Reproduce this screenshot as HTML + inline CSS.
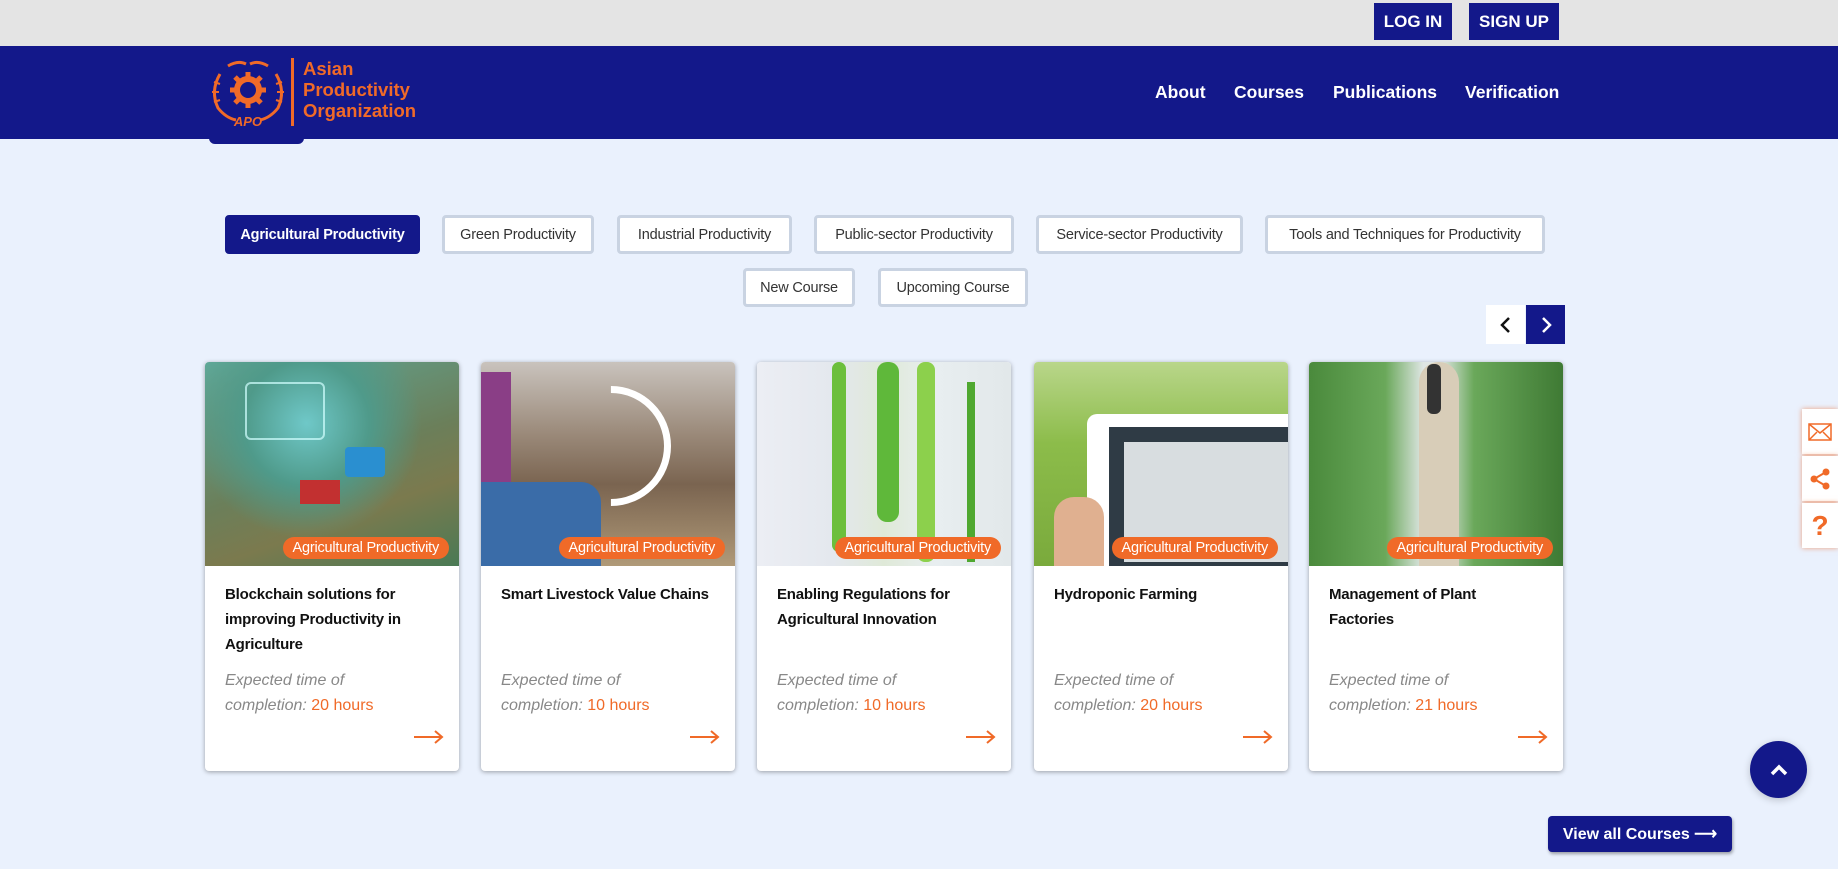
<!DOCTYPE html>
<html><head><meta charset="utf-8"><style>
*{box-sizing:border-box;margin:0;padding:0}
body{width:1838px;height:869px;overflow:hidden;background:#eaf1fd;font-family:"Liberation Sans",Arial,sans-serif;position:relative}
.top{position:absolute;left:0;top:0;width:1838px;height:46px;background:#e4e4e4}
.tb{position:absolute;top:3px;height:37px;background:#13188a;color:#fff;font-weight:bold;font-size:17px;display:flex;align-items:center;justify-content:center}
.nav{position:absolute;left:0;top:46px;width:1838px;height:93px;background:#13188a}
.nl{position:absolute;top:82px;color:#fff;font-weight:bold;font-size:17.5px}
.tab{position:absolute;left:209px;top:136px;width:95px;height:8px;background:#13188a;border-radius:0 0 6px 6px}
.f{position:absolute;height:39px;background:#fff;border:3px solid #c9d3e2;border-radius:4px;font-size:14.5px;color:#333;display:flex;align-items:center;justify-content:center;white-space:nowrap;letter-spacing:-.2px}
.f.a{background:#13188a;border-color:#13188a;color:#fff;font-weight:bold}
.arr{position:absolute;top:305px;width:39px;height:39px;display:flex;align-items:center;justify-content:center}
.card{position:absolute;top:362px;width:254px;height:409px;background:#fff;border-radius:4px;box-shadow:0 1px 5px rgba(0,0,0,.35);overflow:hidden}
.img{position:absolute;left:0;top:0;width:254px;height:204px;overflow:hidden}
.badge{position:absolute;right:10px;top:175px;height:22px;padding:0 10px;background:#f06a28;color:#fff;border-radius:11px;font-size:14.5px;line-height:22px;white-space:nowrap;letter-spacing:-.2px}
.t{position:absolute;left:20px;top:220px;width:225px;font-size:15px;font-weight:bold;color:#111;line-height:25px;letter-spacing:-.2px}
.e{position:absolute;left:20px;top:306px;width:200px;font-size:16px;font-style:italic;color:#888;line-height:25px}
.e span{color:#f06a28;font-style:normal}
.ar{position:absolute;left:208px;top:368px}
.side{position:absolute;left:1802px;width:36px;height:45px;background:#fff;box-shadow:0 0 5px rgba(240,106,40,.6);display:flex;align-items:center;justify-content:center}
</style></head><body>
<div class="top"></div>
<div class="tb" style="left:1374px;width:78px">LOG IN</div>
<div class="tb" style="left:1469px;width:90px">SIGN UP</div>
<div class="nav"></div>
<div class="tab"></div>
<svg style="position:absolute;left:208px;top:56px" width="80" height="74" viewBox="0 0 80 74">
<g fill="none" stroke="#f06a28" stroke-width="3">
<path d="M12 18 Q2 35 10 52 Q18 62 28 64"/><path d="M68 18 Q78 35 70 52 Q62 62 52 64"/>
<path d="M20 10 Q30 4 38 8"/><path d="M60 10 Q50 4 42 8"/>
<circle cx="40" cy="34" r="11" stroke-width="6"/></g>
<g stroke="#f06a28" stroke-width="5"><path d="M40 16v6M40 46v6M22 34h6M52 34h6M27 21l4 4M49 43l4 4M53 21l-4 4M27 47l4-4"/></g>
<g stroke="#f06a28" stroke-width="2" fill="none"><path d="M6 26l6 2M4 36l7 0M6 46l6-2M74 26l-6 2M76 36l-7 0M74 46l-6-2"/></g>
<text x="40" y="70" text-anchor="middle" font-family="Liberation Sans" font-weight="bold" font-style="italic" font-size="13" fill="#f06a28">APO</text>
</svg>
<div style="position:absolute;left:291px;top:58px;width:3px;height:68px;background:#f06a28"></div>
<div style="position:absolute;left:303px;top:58px;color:#f06a28;font-weight:bold;font-size:18.5px;line-height:21px">Asian<br>Productivity<br>Organization</div>
<div class="nl" style="left:1155px">About</div>
<div class="nl" style="left:1234px">Courses</div>
<div class="nl" style="left:1333px">Publications</div>
<div class="nl" style="left:1465px">Verification</div>

<div class="f a" style="left:225px;top:215px;width:195px">Agricultural Productivity</div>
<div class="f" style="left:442px;top:215px;width:152px">Green Productivity</div>
<div class="f" style="left:617px;top:215px;width:175px">Industrial Productivity</div>
<div class="f" style="left:814px;top:215px;width:200px">Public-sector Productivity</div>
<div class="f" style="left:1036px;top:215px;width:207px">Service-sector Productivity</div>
<div class="f" style="left:1265px;top:215px;width:280px">Tools and Techniques for Productivity</div>
<div class="f" style="left:743px;top:268px;width:112px">New Course</div>
<div class="f" style="left:878px;top:268px;width:150px">Upcoming Course</div>

<div class="arr" style="left:1486px;background:#fff"><svg width="14" height="18"><path d="M10 2L3 9l7 7" stroke="#111" stroke-width="2.5" fill="none"/></svg></div>
<div class="arr" style="left:1526px;background:#13188a"><svg width="14" height="18"><path d="M4 2l7 7-7 7" stroke="#fff" stroke-width="2.5" fill="none"/></svg></div>

<div class="card" style="left:205px"><div class="img" style="background:radial-gradient(circle at 40% 30%,#6fc8c8 0,#4f9a8a 30%,transparent 55%),linear-gradient(160deg,#5fa898,#6b7f5a 50%,#7b7a4e 70%,#4a7a55)">
<div style="position:absolute;left:140px;top:85px;width:40px;height:30px;background:#2a8fd0;border-radius:4px"></div>
<div style="position:absolute;left:95px;top:118px;width:40px;height:24px;background:#c23030"></div>
<div style="position:absolute;left:40px;top:20px;width:80px;height:58px;border:2px solid rgba(210,255,255,.7);border-radius:6px"></div>
</div><div class="badge">Agricultural Productivity</div>
<div class="t">Blockchain solutions for improving Productivity in Agriculture</div>
<div class="e">Expected time of completion: <span>20 hours</span></div>
<svg class="ar" width="32" height="14"><path d="M1 7h28M22 1l7 6-7 6" stroke="#f06a28" stroke-width="2" fill="none"/></svg></div>

<div class="card" style="left:481px"><div class="img" style="background:linear-gradient(180deg,#c9c3bd 0,#9b8a7a 35%,#7a6450 60%,#b09a78 100%)">
<div style="position:absolute;left:0;top:10px;width:30px;height:120px;background:#8a3e86"></div>
<div style="position:absolute;left:0;top:120px;width:120px;height:84px;background:#3a6ca8;border-radius:0 20px 0 0"></div>
<div style="position:absolute;left:70px;top:24px;width:120px;height:120px;border:7px solid #fff;border-left-color:transparent;border-bottom-color:transparent;border-radius:50%;transform:rotate(45deg)"></div>
</div><div class="badge">Agricultural Productivity</div>
<div class="t">Smart Livestock Value Chains</div>
<div class="e">Expected time of completion: <span>10 hours</span></div>
<svg class="ar" width="32" height="14"><path d="M1 7h28M22 1l7 6-7 6" stroke="#f06a28" stroke-width="2" fill="none"/></svg></div>

<div class="card" style="left:757px"><div class="img" style="background:linear-gradient(90deg,#eceef4 0,#e4e8ee 30%,#dfe9d8 50%,#e8eef0 70%,#e2e8ea 100%)">
<div style="position:absolute;left:75px;top:0;width:14px;height:190px;background:#6cbf3c;border-radius:7px"></div>
<div style="position:absolute;left:120px;top:0;width:22px;height:160px;background:#5fb83a;border-radius:10px"></div>
<div style="position:absolute;left:160px;top:0;width:18px;height:200px;background:#8cd04c;border-radius:8px"></div>
<div style="position:absolute;left:210px;top:20px;width:8px;height:180px;background:#4fa830"></div>
</div><div class="badge">Agricultural Productivity</div>
<div class="t">Enabling Regulations for Agricultural Innovation</div>
<div class="e">Expected time of completion: <span>10 hours</span></div>
<svg class="ar" width="32" height="14"><path d="M1 7h28M22 1l7 6-7 6" stroke="#f06a28" stroke-width="2" fill="none"/></svg></div>

<div class="card" style="left:1034px"><div class="img" style="background:linear-gradient(180deg,#b9d68a,#8cbc4a 40%,#7aaa3c)">
<div style="position:absolute;left:53px;top:52px;width:210px;height:160px;background:#fff;border-radius:10px"></div>
<div style="position:absolute;left:75px;top:65px;width:190px;height:150px;background:#2f3b45"></div>
<div style="position:absolute;left:90px;top:80px;width:170px;height:120px;background:#d8dde0"></div>
<div style="position:absolute;left:20px;top:135px;width:50px;height:70px;background:#e0b090;border-radius:20px 20px 0 0"></div>
</div><div class="badge">Agricultural Productivity</div>
<div class="t">Hydroponic Farming</div>
<div class="e">Expected time of completion: <span>20 hours</span></div>
<svg class="ar" width="32" height="14"><path d="M1 7h28M22 1l7 6-7 6" stroke="#f06a28" stroke-width="2" fill="none"/></svg></div>

<div class="card" style="left:1309px"><div class="img" style="background:linear-gradient(90deg,#4a8a3c 0,#6aa85a 30%,#dfe6e4 45%,#dfe6e4 52%,#6aa85a 65%,#3f7a34 100%)">
<div style="position:absolute;left:110px;top:0;width:40px;height:204px;background:#d8cdb8;border-radius:20px 20px 0 0"></div>
<div style="position:absolute;left:118px;top:2px;width:14px;height:50px;background:#333;border-radius:6px"></div>
</div><div class="badge">Agricultural Productivity</div>
<div class="t">Management of Plant<br>Factories</div>
<div class="e">Expected time of completion: <span>21 hours</span></div>
<svg class="ar" width="32" height="14"><path d="M1 7h28M22 1l7 6-7 6" stroke="#f06a28" stroke-width="2" fill="none"/></svg></div>

<div class="side" style="top:409px"><svg width="24" height="18"><rect x="1" y="1" width="22" height="16" fill="none" stroke="#f06a28" stroke-width="1.5"/><path d="M1 1l11 9 11-9M1 17l8-8M23 17l-8-8" stroke="#f06a28" stroke-width="1.5" fill="none"/></svg></div>
<div class="side" style="top:456px"><svg width="22" height="22"><circle cx="17" cy="4" r="3.5" fill="#f06a28"/><circle cx="5" cy="11" r="3.5" fill="#f06a28"/><circle cx="17" cy="18" r="3.5" fill="#f06a28"/><path d="M17 4L5 11l12 7" stroke="#f06a28" stroke-width="2" fill="none"/></svg></div>
<div class="side" style="top:503px;color:#f06a28;font-weight:bold;font-size:28px">?</div>

<div style="position:absolute;left:1750px;top:741px;width:57px;height:57px;border-radius:50%;background:#13188a;box-shadow:0 2px 8px rgba(0,0,0,.2);display:flex;align-items:center;justify-content:center"><svg width="18" height="12"><path d="M2 10l7-7 7 7" stroke="#fff" stroke-width="3.5" fill="none"/></svg></div>
<div style="position:absolute;left:1548px;top:816px;width:184px;height:36px;background:#13188a;border-radius:4px;box-shadow:1px 2px 3px rgba(0,0,0,.35);color:#fff;font-weight:bold;font-size:16px;display:flex;align-items:center;justify-content:center">View all Courses ⟶</div>
</body></html>
